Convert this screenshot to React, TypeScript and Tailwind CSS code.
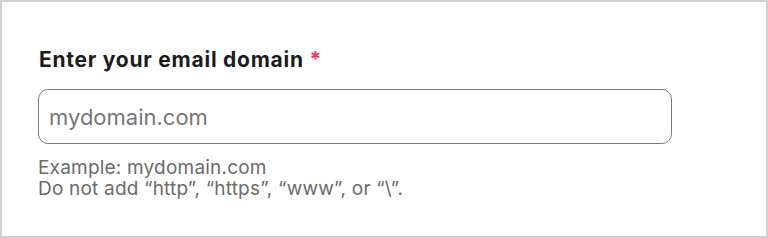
export default function App() {
  return (
    <div className="w-[768px] h-[238px] border-2 border-[#d0d0d0] bg-white font-['Inter',sans-serif] pl-[36px] pt-[44px]">
      <div className="flex flex-col w-[634px]">
        <label className="pl-[1px] text-[21px] leading-[28px] font-bold tracking-[0.75px] text-[#1c1c1c]">
          Enter your email domain <span className="text-[#e8365d]">*</span>
        </label>
        <input
          type="text"
          placeholder="mydomain.com"
          className="mt-[15px] h-[55px] w-full rounded-[10px] border-[1.5px] border-[#7a7a7a] px-[10px] text-[22px] text-[#1c1c1c] placeholder:text-[#767676] outline-none"
        />
        <div className="mt-[13px] text-[19px] leading-[21px] tracking-[0.2px] text-[#6b6b6b]">
          <p>Example: mydomain.com</p>
          <p>Do not add “http”, “https”, “www”, or “\”.</p>
        </div>
      </div>
    </div>
  );
}
